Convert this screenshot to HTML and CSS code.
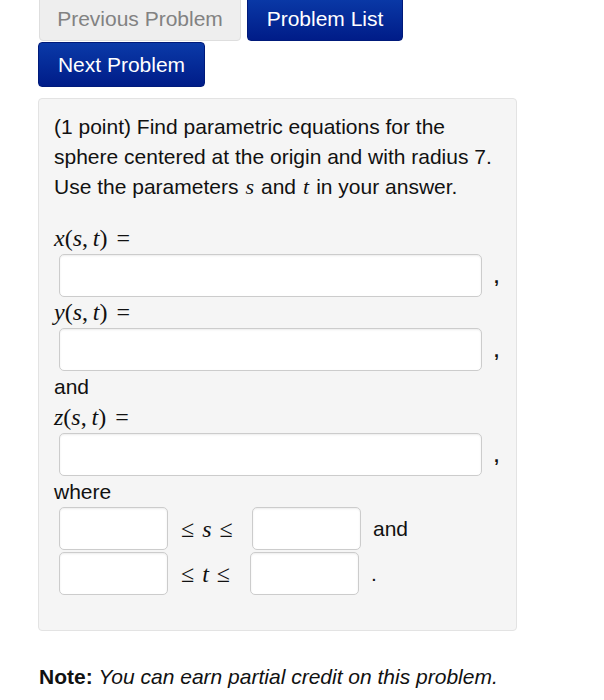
FILE: index.html
```html
<!DOCTYPE html>
<html>
<head>
<meta charset="utf-8">
<link rel="stylesheet" href="styles.css">
</head>
<body>
<div class="page">
  <div class="nav">
    <div class="nav-row">
      <span class="btn btn-disabled">Previous Problem</span>
      <span class="btn btn-primary btn-list">Problem List</span>
    </div>
    <div class="nav-row">
      <span class="btn btn-primary btn-next">Next Problem</span>
    </div>
  </div>

  <div class="card">
    <div class="intro">
      <span class="intro-line">(1 point) Find parametric equations for the</span>
      <span class="intro-line">sphere centered at the origin and with radius 7.</span>
      <span class="intro-line">Use the parameters<span class="iv">s</span>and<span class="iv">t</span>in your answer.</span>
    </div>

    <div class="math-line"><span class="mi">x</span><span class="mo">(</span><span class="mi">s</span><span class="mo">,&#8201;</span><span class="mi">t</span><span class="mo">)</span><span class="mo eq">=</span></div>
    <div class="answer-row"><span class="input wide"></span><span class="punct">,</span></div>

    <div class="math-line"><span class="mi">y</span><span class="mo">(</span><span class="mi">s</span><span class="mo">,&#8201;</span><span class="mi">t</span><span class="mo">)</span><span class="mo eq">=</span></div>
    <div class="answer-row"><span class="input wide"></span><span class="punct">,</span></div>

    <div class="text-line">and</div>
    <div class="math-line"><span class="mi">z</span><span class="mo">(</span><span class="mi">s</span><span class="mo">,&#8201;</span><span class="mi">t</span><span class="mo">)</span><span class="mo eq">=</span></div>
    <div class="answer-row"><span class="input wide"></span><span class="punct">,</span></div>

    <div class="text-line">where</div>
    <div class="range-row">
      <span class="input small"></span>
      <span class="rel"><span class="mo">≤</span><span class="mi var">s</span><span class="mo">≤</span></span>
      <span class="input small"></span>
      <span class="tail">and</span>
    </div>
    <div class="range-row second">
      <span class="input small"></span>
      <span class="rel"><span class="mo">≤</span><span class="mi var">t</span><span class="mo">≤</span></span>
      <span class="input small"></span>
      <span class="tail">.</span>
    </div>
  </div>

  <p class="note"><b>Note:</b> <i>You can earn partial credit on this problem.</i></p>
</div>
</body>
</html>
```

FILE: styles.css
```css
html, body {
  margin: 0;
  padding: 0;
  background: #ffffff;
}

body {
  font-family: "Liberation Sans", Arial, Helvetica, sans-serif;
  color: #111111;
  font-size: 21px;
}

.page {
  padding-left: 38px;
  width: 480px;
  margin-top: -4px;
}

.nav {
  display: flex;
  flex-direction: column;
  gap: 1px;
}

.nav-row {
  display: flex;
  gap: 6px;
}

.btn {
  display: inline-flex;
  align-items: center;
  justify-content: center;
  height: 45px;
  box-sizing: border-box;
  border-radius: 4px;
  font-size: 21px;
  line-height: 1;
}

.btn-disabled {
  margin-left: 1px;
  width: 202px;
  background: #eeeeee;
  border: 1px solid #dedede;
  color: #828282;
}

.btn-primary {
  background: linear-gradient(#0a3aa8, #001c88);
  border: 1px solid #001a7a;
  color: #ffffff;
}

.btn-list {
  width: 156px;
}

.btn-next {
  width: 167px;
}

.card {
  margin-top: 11px;
  background: #f5f5f5;
  border: 1px solid #e3e3e3;
  border-radius: 4px;
  padding: 13px 15px 35px 15px;
  width: 479px;
  box-sizing: border-box;
}

.intro {
  margin: 0 0 21px 0;
  line-height: 30px;
  font-size: 21px;
}

.intro-line {
  display: block;
  white-space: nowrap;
}

.iv {
  display: inline-block;
  font-family: "Liberation Serif", "Times New Roman", serif;
  font-style: italic;
  font-size: 22px;
  line-height: 1;
  margin: 0 7px;
}

.mi {
  font-family: "Liberation Serif", "Times New Roman", serif;
  font-style: italic;
  font-size: 24px;
  line-height: 1;
}

.mo {
  font-family: "Liberation Serif", "Times New Roman", serif;
  font-size: 24px;
  line-height: 1;
}

.eq {
  margin-left: 9px;
}

.math-line {
  height: 31px;
  line-height: 31px;
}

.text-line {
  height: 31px;
  line-height: 31px;
}

.answer-row {
  display: flex;
  align-items: center;
  padding-left: 5px;
  height: 43px;
}

.input {
  display: block;
  box-sizing: border-box;
  height: 43px;
  background: #ffffff;
  border: 1px solid #cccccc;
  border-radius: 5px;
  box-shadow: inset 0 1px 2px rgba(0, 0, 0, 0.08);
}

.wide {
  width: 423px;
}

.punct {
  margin-left: 12px;
  margin-top: 4px;
  font-weight: bold;
  font-size: 18px;
}

.range-row {
  display: flex;
  align-items: center;
  padding-left: 5px;
  height: 43px;
}

.range-row.second {
  margin-top: 2px;
}

.small {
  width: 109px;
}

.rel {
  display: flex;
  align-items: baseline;
  width: 84px;
  padding-left: 13px;
  box-sizing: border-box;
  white-space: nowrap;
}

.rel .var {
  margin: 0 8px;
}

.range-row.second .rel {
  width: 82px;
}

.tail {
  margin-left: 12px;
}

.note {
  margin: 31px 0 0 1px;
  font-size: 21px;
  line-height: 30px;
  color: #111111;
}
```
